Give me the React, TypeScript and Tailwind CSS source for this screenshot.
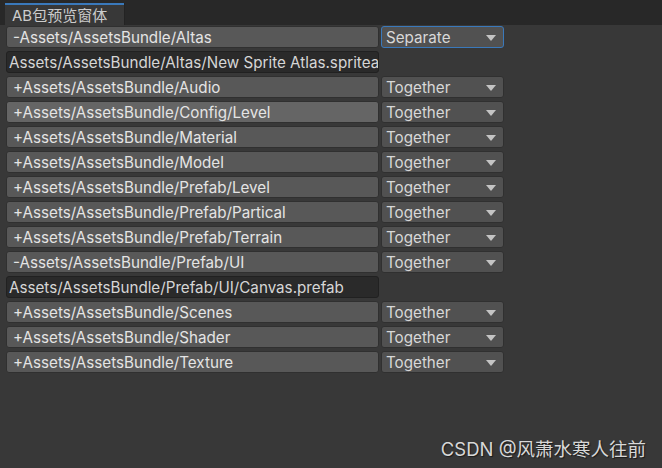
import React from 'react';

type Row =
  | { kind: 'folder'; label: string; mode: string; focused?: boolean; hover?: boolean }
  | { kind: 'file'; label: string };

const rows: Row[] = [
  { kind: 'folder', label: '-Assets/AssetsBundle/Altas', mode: 'Separate', focused: true },
  { kind: 'file', label: 'Assets/AssetsBundle/Altas/New Sprite Atlas.spriteatlas' },
  { kind: 'folder', label: '+Assets/AssetsBundle/Audio', mode: 'Together' },
  { kind: 'folder', label: '+Assets/AssetsBundle/Config/Level', mode: 'Together', hover: true },
  { kind: 'folder', label: '+Assets/AssetsBundle/Material', mode: 'Together' },
  { kind: 'folder', label: '+Assets/AssetsBundle/Model', mode: 'Together' },
  { kind: 'folder', label: '+Assets/AssetsBundle/Prefab/Level', mode: 'Together' },
  { kind: 'folder', label: '+Assets/AssetsBundle/Prefab/Partical', mode: 'Together' },
  { kind: 'folder', label: '+Assets/AssetsBundle/Prefab/Terrain', mode: 'Together' },
  { kind: 'folder', label: '-Assets/AssetsBundle/Prefab/UI', mode: 'Together' },
  { kind: 'file', label: 'Assets/AssetsBundle/Prefab/UI/Canvas.prefab' },
  { kind: 'folder', label: '+Assets/AssetsBundle/Scenes', mode: 'Together' },
  { kind: 'folder', label: '+Assets/AssetsBundle/Shader', mode: 'Together' },
  { kind: 'folder', label: '+Assets/AssetsBundle/Texture', mode: 'Together' },
];

function Dropdown({ value, focused }: { value: string; focused?: boolean }) {
  return (
    <div
      className={`flex h-[22px] w-[123px] items-center justify-between rounded-[3px] bg-[#515151] pl-[4px] pr-[7px] pt-[1px] text-[#d8d8d8] ${
        focused ? 'border border-[#3a79bb]' : 'border border-[#303030]'
      }`}
    >
      <span>{value}</span>
      <svg width="10" height="6" viewBox="0 0 10 6">
        <path d="M0 0 H10 L5 6 Z" fill="#c4c4c4" />
      </svg>
    </div>
  );
}

export default function App() {
  return (
    <div
      className="flex h-[468px] w-[662px] flex-col overflow-hidden bg-[#383838] text-[15.2px] leading-none"
      style={{ fontFamily: 'Inter, "Noto Sans CJK SC", sans-serif' }}
    >
      {/* header with tab */}
      <div className="flex h-[25px] shrink-0 items-end bg-[#282828] pl-[5px]">
        <div className="flex h-[22px] w-[120px] flex-col border-r border-[#232323] bg-[#383838]">
          <div className="h-[2px] bg-[#3a79bb]" />
          <div className="flex flex-1 items-center pl-[7px] pt-[1px] text-[15px] text-[#cccccc]">AB包预览窗体</div>
        </div>
      </div>

      {/* list */}
      <div className="relative flex flex-1 flex-col gap-[3px] pl-[6px] pt-[1px]">
        {rows.map((r, i) =>
          r.kind === 'folder' ? (
            <div key={i} className="flex items-center gap-[2px]">
              <div
                className={`flex h-[22px] w-[373px] items-center overflow-hidden whitespace-nowrap rounded-[3px] border border-[#303030] pl-[6px] pt-[2px] text-[#e4e4e4] ${
                  r.hover ? 'bg-[#656565]' : 'bg-[#585858]'
                }`}
              >
                {r.label}
              </div>
              <Dropdown value={r.mode} focused={r.focused} />
            </div>
          ) : (
            <div key={i} className="flex items-center">
              <div className="flex h-[22px] w-[373px] items-center overflow-hidden whitespace-nowrap rounded-[3px] border border-[#212121] bg-[#2a2a2a] pl-[2px] pt-[2px] text-[#d6d6d6]">
                {r.label}
              </div>
            </div>
          )
        )}
        <div
          className="absolute bottom-[10px] right-[16px] text-[18.5px] text-[#d8d8d8]"
          style={{ textShadow: '1px 1px 1px #1a1a1a' }}
        >
          CSDN @风萧水寒人往前
        </div>
      </div>
    </div>
  );
}
